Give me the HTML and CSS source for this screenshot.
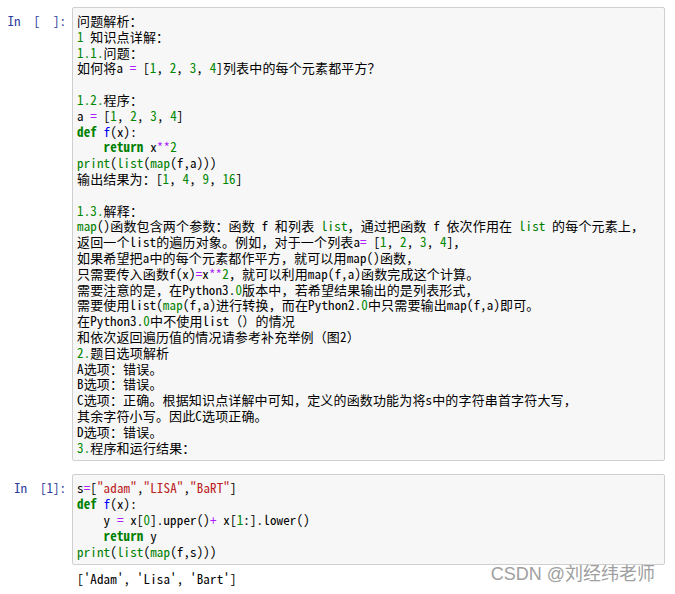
FILE: index.html
```html
<!DOCTYPE html>
<html lang="zh">
<head>
<meta charset="utf-8">
<title>Notebook</title>
<link rel="stylesheet" href="styles.css">
</head>
<body>
<div class="notebook">
  <div class="cell">
    <div class="prompt">In&nbsp;&nbsp;[&nbsp;&nbsp;]:</div>
    <pre class="input">问题解析：
<span class="n">1</span> 知识点详解：
<span class="n">1.1.</span>问题：
如何将a <span class="o">=</span> [<span class="n">1</span>, <span class="n">2</span>, <span class="n">3</span>, <span class="n">4</span>]列表中的每个元素都平方？

<span class="n">1.2.</span>程序：
a <span class="o">=</span> [<span class="n">1</span>, <span class="n">2</span>, <span class="n">3</span>, <span class="n">4</span>]
<span class="k">def</span> <span class="d">f</span>(x):
    <span class="k">return</span> x<span class="o">**</span><span class="n">2</span>
<span class="b">print</span>(<span class="b">list</span>(<span class="b">map</span>(f,a)))
输出结果为：[<span class="n">1</span>, <span class="n">4</span>, <span class="n">9</span>, <span class="n">16</span>]

<span class="n">1.3.</span>解释：
<span class="b">map</span>()函数包含两个参数：函数 f 和列表 <span class="b">list</span>，通过把函数 f 依次作用在 <span class="b">list</span> 的每个元素上，
返回一个list的遍历对象。例如，对于一个列表a<span class="o">=</span> [<span class="n">1</span>, <span class="n">2</span>, <span class="n">3</span>, <span class="n">4</span>]，
如果希望把a中的每个元素都作平方，就可以用map()函数，
只需要传入函数f(x)<span class="o">=</span>x<span class="o">**</span><span class="n">2</span>，就可以利用map(f,a)函数完成这个计算。
需要注意的是，在Python3.<span class="n">0</span>版本中，若希望结果输出的是列表形式，
需要使用list(<span class="b">map</span>(f,a)进行转换，而在Python2.<span class="n">0</span>中只需要输出map(f,a)即可。
在Python3.<span class="n">0</span>中不使用list（）的情况
和依次返回遍历值的情况请参考补充举例（图2）
<span class="n">2.</span>题目选项解析
A选项：错误。
B选项：错误。
C选项：正确。根据知识点详解中可知，定义的函数功能为将s中的字符串首字符大写，
其余字符小写。因此C选项正确。
D选项：错误。
<span class="n">3.</span>程序和运行结果：</pre>
  </div>
  <div class="cell cell-second">
    <div class="prompt">In&nbsp;&nbsp;[1]:</div>
    <pre class="input">s<span class="o">=</span>[<span class="s">"adam"</span>,<span class="s">"LISA"</span>,<span class="s">"BaRT"</span>]
<span class="k">def</span> <span class="d">f</span>(x):
    y <span class="o">=</span> x[<span class="n">0</span>].upper()<span class="o">+</span> x[<span class="n">1</span>:].lower()
    <span class="k">return</span> y
<span class="b">print</span>(<span class="b">list</span>(<span class="b">map</span>(f,s)))</pre>
  </div>
  <div class="output-row">
    <pre class="output">['Adam', 'Lisa', 'Bart']</pre>
  </div>
  <div class="watermark">CSDN @刘经纬老师</div>
</div>
</body>
</html>
```

FILE: styles.css
```css
html, body {
  margin: 0;
  padding: 0;
  background: #ffffff;
}

.notebook {
  position: relative;
  width: 675px;
  height: 594px;
  box-sizing: border-box;
  padding: 7px 10px 0 0;
  overflow: hidden;
  font-family: "Noto Sans Mono CJK SC", "Liberation Mono", "Noto Sans CJK SC", monospace;
  font-size: 13px;
  line-height: 15.8px;
  color: #000;
}

.cell {
  display: flex;
  align-items: flex-start;
}

.cell-second {
  margin-top: 13px;
}

.prompt {
  flex: none;
  width: 66px;
  margin-right: 6px;
  padding-top: 6px;
  text-align: right;
  color: #303F9F;
  white-space: nowrap;
  line-height: 15.8px;
}

.input {
  flex: 1;
  margin: 0;
  padding: 5px 4px;
  background: #f7f7f7;
  border: 1px solid #cfcfcf;
  border-radius: 2px;
  font: inherit;
  letter-spacing: 0.15px;
  white-space: pre;
  overflow: hidden;
}

.output-row {
  display: flex;
  padding-left: 77px;
  margin-top: 6px;
}

.output {
  margin: 0;
  font: inherit;
  letter-spacing: 0.15px;
  white-space: pre;
}

.k { color: #008000; font-weight: bold; }
.b { color: #008000; }
.n { color: #008800; }
.o { color: #AA22FF; }
.s { color: #BA2121; }
.d { color: #0000FF; }

.watermark {
  position: absolute;
  right: 20px;
  top: 563px;
  font-family: "Liberation Sans", "Noto Sans CJK SC", sans-serif;
  font-size: 18px;
  line-height: 22px;
  color: #a0a0a0;
  text-shadow: 0 0 1px #fff;
  white-space: nowrap;
}
```
